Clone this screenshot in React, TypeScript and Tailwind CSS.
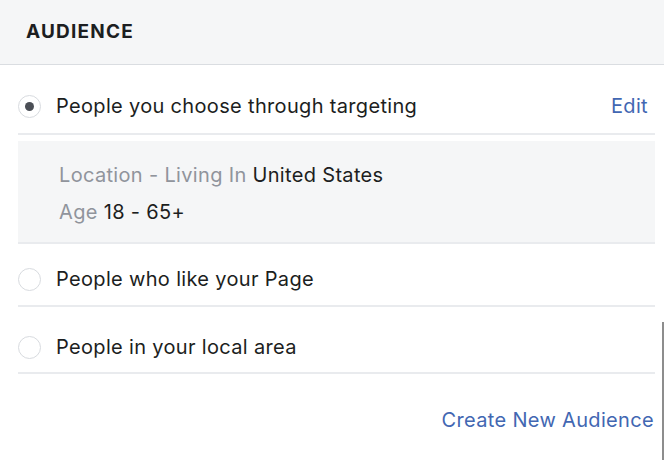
import React from "react";

function Radio({ checked }: { checked?: boolean }) {
  return (
    <span className="flex h-[23px] w-[23px] shrink-0 items-center justify-center rounded-full border-[1.5px] border-[#d8dbdf] bg-white">
      {checked && <span className="h-[9px] w-[9px] rounded-full bg-[#4b4f56]" />}
    </span>
  );
}

export default function App() {
  return (
    <div className="relative h-[460px] w-[664px] overflow-hidden bg-white text-[#1c1e21] [font-family:Inter,'Liberation_Sans',sans-serif]">
      <div className="flex h-[65px] items-center border-b-[1.5px] border-[#dadde1] bg-[#f5f6f7] pl-[26px]">
        <span className="text-[19px] font-bold tracking-[1.2px] text-[#1c1e21]">AUDIENCE</span>
      </div>
      <div className="pl-[18px] pr-[9px] text-[20px] leading-[24px] tracking-[0.33px]">
        <div className="flex items-center border-b-2 border-[#e9ebee] pb-[15px] pt-[29px]">
          <div className="mr-[15px]"><Radio checked /></div>
          <span className="flex-1">People you choose through targeting</span>
          <a className="mr-[7px] text-[#4267b2]">Edit</a>
        </div>
        <div className="mt-[6px] border-b-2 border-[#e9ebee] bg-[#f5f6f7] pb-[18px] pl-[41px] pt-[22px]">
          <div>
            <span className="text-[#90949c]">Location - Living In </span>
            <span>United States</span>
          </div>
          <div className="mt-[13px]">
            <span className="text-[#90949c]">Age </span>
            <span>18 - 65+</span>
          </div>
        </div>
        <div className="flex items-center border-b-2 border-[#e9ebee] pb-[14px] pt-[23px]">
          <div className="mr-[15px]"><Radio /></div>
          <span>People who like your Page</span>
        </div>
        <div className="flex items-center border-b-2 border-[#e9ebee] pb-[13px] pt-[28px]">
          <div className="mr-[15px]"><Radio /></div>
          <span>People in your local area</span>
        </div>
        <div className="flex justify-end pt-[34px]">
          <a className="mr-[1px] text-[#4267b2]">Create New Audience</a>
        </div>
      </div>
      <div className="absolute right-0 top-[322px] h-[138px] w-[2px] bg-[#8d8d8d]" />
    </div>
  );
}
